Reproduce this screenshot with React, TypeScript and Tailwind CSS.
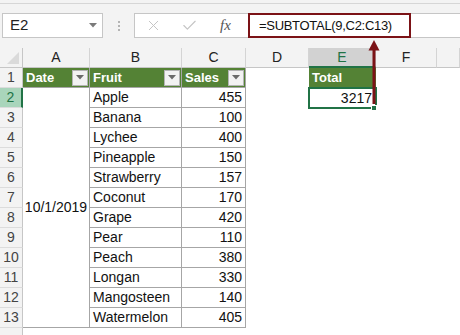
import { X, Check } from "lucide-react";

const FRUITS: [string, number][] = [
  ["Apple", 455],
  ["Banana", 100],
  ["Lychee", 400],
  ["Pineapple", 150],
  ["Strawberry", 157],
  ["Coconut", 170],
  ["Grape", 420],
  ["Pear", 110],
  ["Peach", 380],
  ["Longan", 330],
  ["Mangosteen", 140],
  ["Watermelon", 405],
];

const COLS = ["A", "B", "C", "D", "E", "F", ""];

function FilterButton() {
  return (
    <span className="mr-px flex h-[16px] w-[16px] shrink-0 items-center justify-center border border-[#b4b4b4] bg-[#f2f2f2]">
      <svg width="8" height="5" viewBox="0 0 8 5">
        <path d="M0 0h8L4 4.5z" fill="#6a6a6a" />
      </svg>
    </span>
  );
}

function HeadCell({ label, filter = true }: { label: string; filter?: boolean }) {
  return (
    <div
      className={`flex items-center justify-between bg-[#548235] pl-[3px] text-[13px] font-bold text-white ${
        filter ? "border-b border-r border-[#a6a6a6]" : ""
      }`}
    >
      <span>{label}</span>
      {filter && <FilterButton />}
    </div>
  );
}

function RowHead({ n, active = false }: { n?: number; active?: boolean }) {
  return (
    <div
      className={`flex items-center justify-center border-b border-[#dcdcdc] ${
        active
          ? "border-r-2 border-r-[#217346] bg-[#a9d5bb] text-[#217346]"
          : "border-r border-r-[#c6c6c6] bg-[#f3f3f3] text-[#444]"
      }`}
    >
      {n}
    </div>
  );
}

export default function App() {
  return (
    <div className="relative h-[335px] w-[460px] overflow-hidden bg-white font-['Liberation_Sans',Arial,sans-serif] text-[14px] text-[#111]">
      {/* Barra de fórmulas */}
      <div className="flex h-[48px] flex-col bg-[#f3f3f3]">
        <div className="h-[4px] border-b border-[#d6d6d6]" />
        <div className="mt-[9px] flex items-start">
          <div className="ml-[2px] flex h-[25px] w-[101px] items-center justify-between border border-[#c6c6c6] bg-white pl-[7px] pr-[5px] text-[15px] text-[#222]">
            <span>E2</span>
            <svg width="8" height="5" viewBox="0 0 8 5">
              <path d="M0 0h8L4 4.5z" fill="#7a7a7a" />
            </svg>
          </div>
          <div className="flex h-[25px] w-[31px] flex-col items-center justify-center gap-[2px]">
            <span className="h-[2px] w-[2px] bg-[#b4b4b4]" />
            <span className="h-[2px] w-[2px] bg-[#b4b4b4]" />
            <span className="h-[2px] w-[2px] bg-[#b4b4b4]" />
          </div>
          <div className="flex h-[25px] flex-1 items-center border border-r-0 border-[#c6c6c6] bg-white">
            <div className="flex w-[36px] justify-center">
              <X size={17} strokeWidth={1.4} color="#c4c4c4" />
            </div>
            <div className="flex w-[36px] justify-center">
              <Check size={17} strokeWidth={1.6} color="#c4c4c4" />
            </div>
            <div className="w-[41px] pl-[13px] font-['Liberation_Serif',serif] text-[15px] italic text-[#555]">
              fx
            </div>
            <div className="flex h-[25px] w-[163px] items-center border-2 border-[#7b1216] pl-[9px] text-[13px] tracking-[-0.3px] text-[#111]">
              =SUBTOTAL(9,C2:C13)
            </div>
          </div>
        </div>
      </div>

      {/* Hoja */}
      <div className="grid auto-rows-[20px] grid-cols-[23px_67px_92px_64px_63px_67px_61px_1fr]">
        {/* Cabecera de columnas */}
        <div className="relative border-b border-r border-[#c6c6c6] bg-[#f3f3f3]">
          <svg className="absolute bottom-[3px] right-[3px]" width="12" height="12" viewBox="0 0 12 12">
            <path d="M12 0V12H0z" fill="#dadada" />
          </svg>
        </div>
        {COLS.map((c, i) =>
          c === "E" ? (
            <div
              key={i}
              className="flex items-center justify-center border-b-2 border-r border-b-[#217346] border-r-[#d4d4d4] bg-[#d2d2d2] text-[#217346]"
            >
              {c}
            </div>
          ) : (
            <div
              key={i}
              className="flex items-center justify-center border-b border-r border-b-[#c6c6c6] border-r-[#d4d4d4] bg-[#f3f3f3] text-[#222]"
            >
              {c}
            </div>
          )
        )}

        {/* Fila 1 */}
        <RowHead n={1} />
        <HeadCell label="Date" />
        <HeadCell label="Fruit" />
        <HeadCell label="Sales" />
        <div />
        <HeadCell label="Total" filter={false} />
        <div />
        <div />

        {/* A2:A13 combinada */}
        <div className="col-start-2 row-span-12 row-start-3 flex items-center justify-center border-b border-r border-[#a6a6a6]">
          10/1/2019
        </div>

        {FRUITS.map(([name, sales], i) => (
          <div key={name} className="contents">
            <RowHead n={i + 2} active={i === 0} />
            <div className="flex items-center border-b border-r border-[#a6a6a6] pl-[3px]">{name}</div>
            <div className="flex items-center justify-end border-b border-r border-[#a6a6a6] pr-[3px]">{sales}</div>
            <div />
            {i === 0 ? (
              <div className="relative flex items-center justify-end pr-[4px]">
                3217
                <div className="absolute -bottom-px -left-px -right-px -top-px border-2 border-[#217346]" />
                <div className="absolute -bottom-[3px] -right-[1px] h-[6px] w-[6px] border border-white bg-[#217346]" />
              </div>
            ) : (
              <div />
            )}
            <div />
            <div />
          </div>
        ))}

        <RowHead />
      </div>

      {/* Flecha */}
      <svg className="absolute left-[368px] top-[40px]" width="12" height="64" viewBox="0 0 12 64">
        <path d="M6 0L11.5 10.5H0.5z" fill="#7b1216" />
        <rect x="4.5" y="9" width="3" height="55" fill="#7b1216" />
      </svg>
    </div>
  );
}
